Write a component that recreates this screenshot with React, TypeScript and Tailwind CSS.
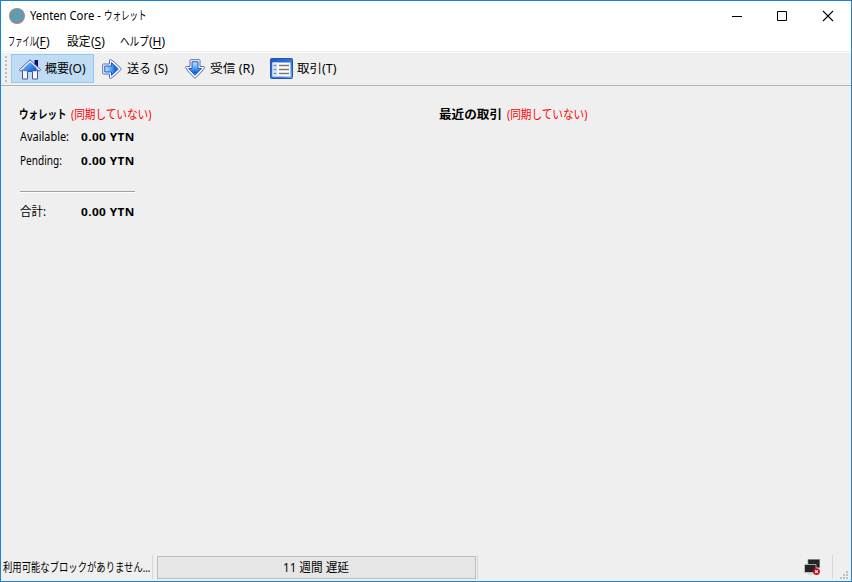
import type React from "react"

const menus = [
    { label: "ファイル", hotkey: "F", box: "w-[59px]", kana: "w-[28px]", text: "scale-x-[0.6]" },
    { label: "設定", hotkey: "S", box: "w-[53px]", kana: "w-[24px]", text: "scale-x-[0.98]" },
    { label: "ヘルプ", hotkey: "H", box: "w-[60px]", kana: "w-[29px]", text: "scale-x-[0.8]" },
]

const AppIcon = () => (
    <svg width="16" height="16" viewBox="0 0 16 16" fill="none">
        <circle cx="8" cy="8" r="8" fill="#8b8d90" />
        <path d="M3 3.500h10M3.500 3.500v5M12.500 3.500v5M3 8.500h10M8 3.500v5M6 8.500c0 2-1 3.300-3 3.800M10 8.500c0 2 1 3.300 3 3.800" stroke="#12b5f5" strokeWidth="1.100" />
    </svg>
)

const HomeIcon = () => (
    <svg width="24" height="24" viewBox="0 0 24 24">
        <defs>
            <linearGradient id="home" x1="0" y1="0" x2="1" y2="1">
                <stop offset="0" stopColor="#c4e6ff" />
                <stop offset="0.4" stopColor="#4d9df0" />
                <stop offset="1" stopColor="#0b50c4" />
            </linearGradient>
        </defs>
        <path d="M16.500 3h3.500v8h-3.500z" fill="#0c0c78" />
        <path d="M4.500 11.500V22h5v-7h5v7h5V11.500L12 4z" fill="#fafcff" stroke="#4c50a4" />
        <path d="M12 2.800 1.400 12.800l1.500 1.400 2-1.500h14.200l2 1.500 1.500-1.400z" fill="#fff" stroke="#4c50a4" />
        <path d="M12 4.800 5.500 11v3.200h13V11z" fill="url(#home)" />
        <path d="M9.500 22v-7.500h5V22" fill="#c0dcf3" stroke="#4c50a4" />
    </svg>
)

const ArrowIcon = ({ id, down }: { id: string, down?: boolean }) => (
    <svg width="24" height="24" viewBox="0 0 24 24">
        <defs>
            <linearGradient id={id} x1="0" y1="0" x2="1" y2="0">
                <stop offset="0" stopColor="#bfe1ff" />
                <stop offset="0.4" stopColor="#68b2f8" />
                <stop offset="0.8" stopColor="#1461d2" />
                <stop offset="1" stopColor="#4c9df0" />
            </linearGradient>
        </defs>
        <g transform={down ? "rotate(90 12 12)" : undefined}>
            <path d="M3.500 7h6V3.200c0-.7.8-1 1.300-.5l3.200 2.100 6.900 6.500c.4.4.4 1 0 1.400L14 19.200l-3.200 2.100c-.5.500-1.300.2-1.300-.5V17h-6c-.5 0-.8-.3-.8-.8V7.800c0-.5.3-.8.8-.8z" fill="#f8fbff" stroke="#5c68b4" />
            <path d="M4.800 9h6.700V5.600l6.800 6.400-6.800 6.400V15H4.800z" fill={`url(#${id})`} stroke="#1c5bc8" />
        </g>
    </svg>
)

const ListIcon = () => (
    <svg width="24" height="24" viewBox="0 0 24 24">
        <defs>
            <linearGradient id="list" x1="0" y1="0" x2="1" y2="1">
                <stop offset="0" stopColor="#2058bd" />
                <stop offset="0.7" stopColor="#3d7de0" />
                <stop offset="1" stopColor="#74adf5" />
            </linearGradient>
        </defs>
        <rect x=".5" y="1.500" width="22" height="20" rx="1" fill="url(#list)" stroke="#2454ae" />
        <path d="M2.500 5.500h18v14h-18z" fill="#fff" />
        <path d="M2.500 5.500h5v14h-5z" fill="#dceafc" />
        <path d="M3.500 8.500h3M3.500 12.500h3M3.500 16.500h3" stroke="#7595c0" strokeWidth="1.500" />
        <path d="M9 8.500h10M9 12.500h10M9 16.500h10" stroke="#777" strokeWidth="1.300" />
    </svg>
)

const NetworkIcon = () => (
    <svg width="16" height="16" viewBox="0 0 16 16">
        <path d="M4 .5h11.700v8H4z" fill="#252525" stroke="#777" strokeWidth=".6" />
        <path d="M.5 5.500h11.500v8H.5z" fill="#242424" stroke="#c7c7c7" strokeWidth=".8" />
        <path d="M3.500 14.500h6v1h-6z" fill="#c5c5c5" />
        <circle cx="12.500" cy="12.600" r="3.400" fill="#c90b12" />
        <path d="m11.200 11.300 2.600 2.600m0-2.600-2.600 2.600" stroke="#fff" strokeWidth="1.200" />
    </svg>
)

const Separator = () => <div className="h-6 w-px bg-[#d7d7d7]" />

const Unsynced = () => (
    <span className="inline-block w-[82px]">
        <span className="inline-block origin-left scale-x-[0.885] text-[#f00]">(同期していない)</span>
    </span>
)

const Amount = ({ label, className, labelClass }: { label: string, className: string, labelClass: string }) => (
    <div className={`flex items-center ${className}`}>
        <div className="w-[61px]"><span className={`inline-block origin-left ${labelClass}`}>{label}</span></div>
        <strong className="inline-block origin-left scale-x-[1.07] text-[11px] tracking-[0.4px]">0.00 YTN</strong>
    </div>
)

const App: React.FC = () => {
    return (
        <div className="flex h-[582px] w-[852px] flex-col overflow-hidden border border-[#1883d7] bg-[#efefef] font-['Noto_Sans','Noto_Sans_CJK_JP',sans-serif] text-[12px] leading-4 whitespace-nowrap text-black">
            <header className="flex h-[30px] shrink-0 items-center bg-white pl-2">
                <AppIcon />
                <h1 className="ml-[5px] flex">
                    <span className="w-[74px]"><span className="inline-block origin-left scale-x-[0.94]">Yenten Core -</span></span>
                    <span className="w-[43px]"><span className="inline-block origin-left scale-x-[0.71]">ウォレット</span></span>
                </h1>
                <div className="ml-auto flex pr-[17px]">
                    <svg width="102" height="12" viewBox="0 0 102 12" fill="none" stroke="#000">
                        <path d="M0 6.500h10M45.500 1.500h9v9h-9z" />
                        <path d="m91 1 10 10m0-10-10 10" strokeWidth="1.100" />
                    </svg>
                </div>
            </header>
            <nav className="flex h-5 shrink-0 items-center bg-white pt-0.5 pl-[7px]">
                {menus.map((menu) => (
                    <div key={menu.hotkey} className={`flex ${menu.box}`}>
                        <span className={menu.kana}><span className={`inline-block origin-left ${menu.text}`}>{menu.label}</span></span>
                        <span>(<span className="underline underline-offset-2">{menu.hotkey}</span>)</span>
                    </div>
                ))}
            </nav>
            <div className="flex h-[35px] shrink-0 items-center border-t border-b border-t-[#f0f0f0] border-b-[#b3b3b3] pl-1 shadow-[inset_0_1px_#fff]">
                <svg width="2" height="27" viewBox="0 0 2 27" className="mr-1"><path d="M1 1v26" stroke="#bdbdbd" strokeWidth="2" strokeDasharray="2 2" /></svg>
                <button className="flex h-[29px] w-[83px] items-center border border-[#90c8f6] bg-[#c0dcf3] pl-[6px]">
                    <HomeIcon /><span className="mt-px ml-[3px]">概要(O)</span>
                </button>
                <button className="flex w-[83px] items-center pl-[6px]">
                    <ArrowIcon id="send" /><span className="ml-[3px]">送る (S)</span>
                </button>
                <button className="flex w-[87px] items-center pl-[6px]">
                    <ArrowIcon id="receive" down /><span className="ml-[3px] origin-left scale-x-[1.06]">受信 (R)</span>
                </button>
                <button className="flex items-center pl-[6px]">
                    <ListIcon /><span className="ml-[3px] origin-left scale-x-[1.04]">取引(T)</span>
                </button>
            </div>
            <main className="flex flex-1 pt-[21px] pl-[18px]">
                <section className="w-[419px]">
                    <h2 className="flex">
                        <strong className="w-[52px]"><span className="inline-block origin-left scale-x-[0.79]">ウォレット</span></strong>
                        <Unsynced />
                    </h2>
                    <div className="pl-px">
                        <Amount label="Available:" className="mt-[6px]" labelClass="scale-x-[0.91]" />
                        <Amount label="Pending:" className="mt-2" labelClass="scale-x-[0.84]" />
                        <div className="mt-[22px] h-0.5 w-[115px] border-t border-b border-t-[#a0a0a0] border-b-white" />
                        <Amount label="合計:" className="mt-[11px]" labelClass="scale-x-[0.96]" />
                    </div>
                </section>
                <section>
                    <h2 className="flex pl-px">
                        <strong className="w-[68px]"><span className="inline-block origin-left scale-x-[1.05]">最近の取引</span></strong>
                        <Unsynced />
                    </h2>
                </section>
            </main>
            <footer className="flex h-[26px] shrink-0 items-start">
                <div className="w-[151px] pt-[5px] pl-0.5"><span className="inline-block origin-left scale-x-[0.778]">利用可能なブロックがありません...</span></div>
                <Separator />
                <div className="mt-px mr-px ml-1 h-[23px] w-[319px] border border-[#bcbcbc] bg-[#e6e6e6] pt-[3px] pr-0.5 text-center">
                    <span className="inline-block scale-x-[0.97]">11 週間 遅延</span>
                </div>
                <Separator />
                <div className="mt-1 mr-3 ml-auto"><NetworkIcon /></div>
                <Separator />
                <svg width="10" height="10" viewBox="0 0 10 10" className="mt-4 mr-px ml-[7px] fill-[#bfbfbf]">
                    <path d="M6 0h2v2H6zM3 3h2v2H3zM6 3h2v2H6zM0 6h2v2H0zM3 6h2v2H3zM6 6h2v2H6z" />
                </svg>
            </footer>
        </div>
    );
};

export default App
